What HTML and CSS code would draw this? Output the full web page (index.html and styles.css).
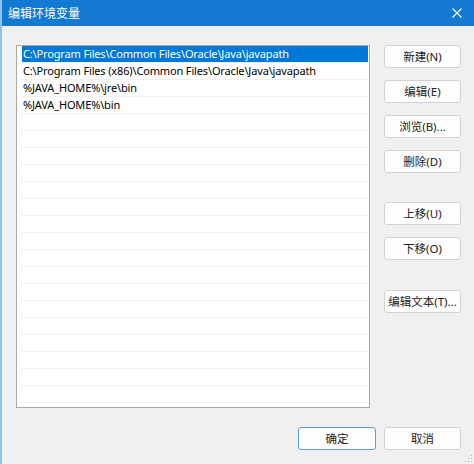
FILE: index.html
```html
<!DOCTYPE html>
<html lang="zh-CN">
<head>
<meta charset="utf-8">
<title>编辑环境变量</title>
<link rel="stylesheet" href="styles.css">
</head>
<body>
<div class="window">
  <div class="titlebar">
    <span class="title">编辑环境变量</span>
    <svg class="close" width="10" height="10" viewBox="0 0 10 10"><path d="M0.5 0.5 L9.5 9.5 M9.5 0.5 L0.5 9.5" stroke="#fff" stroke-width="1.1" fill="none"/></svg>
  </div>
  <div class="main">
    <div class="list">
      <div class="row selected">C:\Program Files\Common Files\Oracle\Java\javapath</div>
      <div class="row">C:\Program Files (x86)\Common Files\Oracle\Java\javapath</div>
      <div class="row">%JAVA_HOME%\jre\bin</div>
      <div class="row">%JAVA_HOME%\bin</div>
    </div>
    <div class="side">
      <button class="btn">新建(N)</button>
      <button class="btn">编辑(E)</button>
      <button class="btn">浏览(B)...</button>
      <button class="btn">删除(D)</button>
      <button class="btn gap-lg">上移(U)</button>
      <button class="btn">下移(O)</button>
      <button class="btn gap-xl">编辑文本(T)...</button>
    </div>
  </div>
  <div class="footer">
    <button class="btn ok">确定</button>
    <button class="btn cancel">取消</button>
  </div>
  <div class="grip"></div>
</div>
</body>
</html>
```

FILE: styles.css
```css
html, body {
  margin: 0;
  padding: 0;
  background: #f0f0f0;
}
body {
  font-family: "Noto Sans", "Noto Sans CJK SC", sans-serif;
  font-size: 12px;
  color: #000;
}
.window {
  position: relative;
  width: 474px;
  height: 464px;
  box-sizing: border-box;
  border-left: 2px solid #8ec2ec;
  background: #f0f0f0;
  overflow: hidden;
}
.titlebar {
  height: 26px;
  background: #1479d3;
  margin-left: -2px;
  padding-left: 8px;
  padding-right: 12px;
  display: flex;
  align-items: center;
  justify-content: space-between;
  color: #fff;
}
.title {
  font-family: "Noto Sans CJK SC", sans-serif;
  font-size: 12px;
  line-height: 26px;
}
.close {
  display: block;
}
.main {
  display: flex;
  gap: 14px;
  padding: 19px 0 0 14px;
}
.list {
  width: 354px;
  height: 363px;
  box-sizing: border-box;
  border: 1px solid #a9a9a9;
  background-color: #fff;
  background-image: repeating-linear-gradient(to bottom, transparent 0, transparent 16px, #f0f0f0 16px, #f0f0f0 17px);
  background-position: 4px 0;
  background-size: calc(100% - 5px) 100%;
  background-repeat: no-repeat;
  padding: 0 1px 0 5px;
}
.row {
  height: 16px;
  line-height: 16px;
  margin-bottom: 1px;
  padding-left: 1px;
  white-space: nowrap;
  overflow: hidden;
  font-size: 11px;
  letter-spacing: -0.15px;
}
.row.selected {
  background: #0078d7;
  color: #fff;
}
.side {
  display: flex;
  flex-direction: column;
  gap: 12px;
  width: 77px;
}
.btn {
  width: 77px;
  height: 23px;
  box-sizing: border-box;
  border: 1px solid #d2d2d2;
  border-radius: 3px;
  background: #fdfdfd;
  font-family: "Noto Sans", "Noto Sans CJK SC", sans-serif;
  font-size: 11.5px;
  color: #222;
  padding: 0;
  line-height: 21px;
}
.gap-lg {
  margin-top: 17px;
}
.gap-xl {
  margin-top: 18px;
}
.footer {
  display: flex;
  justify-content: flex-end;
  gap: 8px;
  padding: 19px 13px 0 0;
}
.ok {
  width: 78px;
  border-color: #5a9fd8;
}
.grip {
  position: absolute;
  right: 2px;
  bottom: 2px;
  width: 8px;
  height: 8px;
  background-image: radial-gradient(circle, #b8b8b8 0.8px, transparent 1px);
  background-size: 3px 3px;
  clip-path: polygon(100% 0, 100% 100%, 0 100%);
}
```
